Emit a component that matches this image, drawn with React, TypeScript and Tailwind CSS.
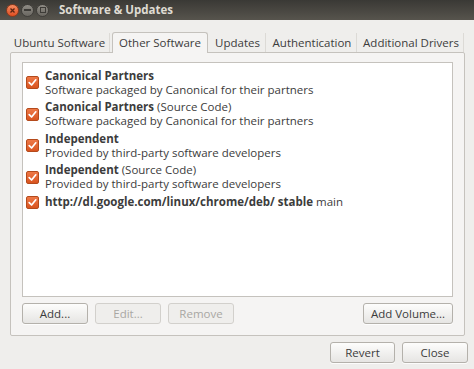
import React from "react";

const font = { fontFamily: '"Open Sans", "Noto Sans", sans-serif' };

function Check() {
  return (
    <div className="w-[13px] h-[13px] shrink-0 rounded-[2px] border border-[#b44a1c] bg-gradient-to-b from-[#ee7846] to-[#d9541e] flex items-center justify-center">
      <svg width="9" height="9" viewBox="0 0 9 9">
        <path d="M1.2 4.6 L3.6 7 L7.8 1.8" fill="none" stroke="#ffffff" strokeWidth="1.7" strokeLinecap="round" strokeLinejoin="round" />
      </svg>
    </div>
  );
}

function Btn({ label, w, disabled }: { label: string; w: string; disabled?: boolean }) {
  return (
    <div
      className={
        "h-[21px] rounded-[3px] border flex items-center justify-center text-[11.5px] " +
        w +
        (disabled
          ? " border-[#d2d0cc] bg-[#efeeec] text-[#a9a7a3]"
          : " border-[#b4b1ab] bg-gradient-to-b from-[#fdfdfc] to-[#e6e5e3] text-[#3c3c3c] shadow-[0_1px_0_rgba(255,255,255,0.8)]")
      }
    >
      {label}
    </div>
  );
}

const sources = [
  { title: "Canonical Partners", extra: "", sub: "Software packaged by Canonical for their partners" },
  { title: "Canonical Partners", extra: " (Source Code)", sub: "Software packaged by Canonical for their partners" },
  { title: "Independent", extra: "", sub: "Provided by third-party software developers" },
  { title: "Independent", extra: " (Source Code)", sub: "Provided by third-party software developers" },
];

export default function App() {
  const tabs = [
    { label: "Ubuntu Software", w: "w-[100px]" },
    { label: "Other Software", w: "w-[96px]", active: true },
    { label: "Updates", w: "w-[56px]" },
    { label: "Authentication", w: "w-[89px]" },
    { label: "Additional Drivers", w: "w-[105px]" },
  ];

  return (
    <div className="w-[474px] h-[369px] bg-[#efeeec] flex flex-col text-[#3c3c3c]" style={font}>
      {/* title bar */}
      <div className="h-[20px] bg-gradient-to-b from-[#3a3935] to-[#57544d] flex items-center">
        <div className="flex items-center gap-[2px] pl-[6px]">
          <div className="w-[13px] h-[13px] rounded-full bg-gradient-to-b from-[#f48a5f] to-[#df4d1f] border border-[#8c3a1d] flex items-center justify-center">
            <svg width="7" height="7" viewBox="0 0 7 7">
              <path d="M1.5 1.5 L5.5 5.5 M5.5 1.5 L1.5 5.5" stroke="#5a2412" strokeWidth="1.3" />
            </svg>
          </div>
          <div className="w-[13px] h-[13px] rounded-full bg-gradient-to-b from-[#8f8c85] to-[#6a6761] border border-[#403e3a] flex items-center justify-center">
            <div className="w-[7px] h-[1.5px] bg-[#3d3b37]" />
          </div>
          <div className="w-[13px] h-[13px] rounded-full bg-gradient-to-b from-[#8f8c85] to-[#6a6761] border border-[#403e3a] flex items-center justify-center">
            <div className="w-[6px] h-[6px] border border-[#3d3b37]" />
          </div>
        </div>
        <div className="ml-[10px] text-[11.5px] font-bold text-[#dfdbd2]">Software &amp; Updates</div>
      </div>

      {/* tabs */}
      <div className="flex items-end pl-[10px] pt-[12px] gap-[2px] relative z-10">
        {tabs.map((t) =>
          t.active ? (
            <div
              key={t.label}
              className={"h-[21px] border border-b-0 border-[#c5c2bd] rounded-t-[3px] bg-[#f5f4f3] flex items-center justify-center text-[11.5px] mb-[-1px] " + t.w}
            >
              {t.label}
            </div>
          ) : (
            <div
              key={t.label}
              className={"h-[19px] border-r border-[#dcdad6] flex items-center justify-center text-[11.5px] " + t.w}
            >
              {t.label}
            </div>
          )
        )}
      </div>

      {/* notebook panel */}
      <div className="ml-[10px] w-[455px] h-[284px] border border-[#c5c2bd] bg-[#f5f4f3] rounded-[2px] px-[11px] pt-[9px] flex flex-col">
        <div className="w-[431px] h-[235px] bg-white border border-[#c5c2bd] pl-[3px] pt-[4px] flex flex-col">
          {sources.map((s, i) => (
            <div key={i} className="flex items-center h-[31.5px]">
              <div className="w-[13px] mr-[6px] flex justify-center">
                <Check />
              </div>
              <div className="flex flex-col leading-[14px] text-[11.5px]">
                <div>
                  <span className="font-bold">{s.title}</span>
                  {s.extra}
                </div>
                <div>{s.sub}</div>
              </div>
            </div>
          ))}
          <div className="flex items-center h-[20px] mt-[-1px]">
            <div className="mr-[6px]">
              <Check />
            </div>
            <div className="text-[11.5px] leading-[14px]">
              <span className="font-bold">http://dl.google.com/linux/chrome/deb/ stable</span> main
            </div>
          </div>
        </div>
        <div className="flex items-center mt-[6px] gap-[7px]">
          <Btn label="Add..." w="w-[66px]" />
          <Btn label="Edit..." w="w-[66px]" disabled />
          <Btn label="Remove" w="w-[66px]" disabled />
          <div className="flex-1" />
          <Btn label="Add Volume..." w="w-[90px]" />
        </div>
      </div>

      {/* bottom buttons */}
      <div className="flex justify-end gap-[7px] pr-[6px] pt-[6px]">
        <Btn label="Revert" w="w-[65px]" />
        <Btn label="Close" w="w-[66px]" />
      </div>
    </div>
  );
}
